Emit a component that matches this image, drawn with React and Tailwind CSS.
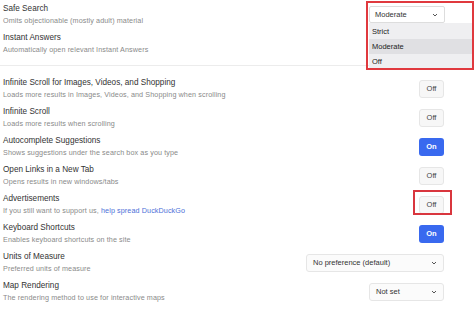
import React from 'react'

const font = { fontFamily: '"Liberation Sans", Arial, sans-serif' }

const Chevron = () => (
  <svg width="6" height="4" viewBox="0 0 6 4" className="shrink-0">
    <path d="M1 1 L3 3 L5 1" fill="none" stroke="#555" strokeWidth="1" />
  </svg>
)

const Toggle = ({ on }) =>
  on ? (
    <div className="w-[25px] h-[18px] rounded-[3px] bg-[#3969ef] text-white text-[7.5px] font-bold flex items-center justify-center">On</div>
  ) : (
    <div className="w-[25px] h-[18px] rounded-[3px] bg-[#f7f7f7] border border-[#e6e6e6] text-[#444] text-[7.5px] flex items-center justify-center">Off</div>
  )

const Select = ({ value, width }) => (
  <div className={`${width} h-[18px] rounded-[3px] bg-[#fbfbfb] border border-[#e6e6e6] flex items-center justify-between pl-[6px] pr-[6px] text-[7.5px] text-[#333]`}>
    <span>{value}</span>
    <Chevron />
  </div>
)

const Row = ({ title, desc, children, pr = 'pr-[30px]' }) => (
  <div className={`h-[29px] flex items-center justify-between ${pr}`}>
    <div className="-mt-[2px]">
      <div className="text-[8.2px] leading-[13px] text-[#333]">{title}</div>
      <div className="text-[7.2px] leading-[11px] text-[#8a8a8a] tracking-[0.1px]">{desc}</div>
    </div>
    {children}
  </div>
)

const rows = [
  { title: 'Infinite Scroll for Images, Videos, and Shopping', desc: 'Loads more results in Images, Videos, and Shopping when scrolling', c: <Toggle /> },
  { title: 'Infinite Scroll', desc: 'Loads more results when scrolling', c: <Toggle /> },
  { title: 'Autocomplete Suggestions', desc: 'Shows suggestions under the search box as you type', c: <Toggle on /> },
  { title: 'Open Links in a New Tab', desc: 'Opens results in new windows/tabs', c: <Toggle /> },
  {
    title: 'Advertisements',
    desc: (
      <>If you still want to support us, <span className="text-[#4b6fd8]">help spread DuckDuckGo</span></>
    ),
    c: (
      <div className="relative">
        <Toggle />
        <div className="absolute -left-[6px] -top-[6px] w-[39px] h-[25px] border-2 border-[#d9363e]" />
      </div>
    ),
  },
  { title: 'Keyboard Shortcuts', desc: 'Enables keyboard shortcuts on the site', c: <Toggle on /> },
  { title: 'Units of Measure', desc: 'Preferred units of measure', c: <Select value="No preference (default)" width="w-[138px]" /> },
  { title: 'Map Rendering', desc: 'The rendering method to use for interactive maps', c: <Select value="Not set" width="w-[75px]" /> },
]

export default function App() {
  return (
    <div className="w-[474px] h-[310px] bg-white overflow-hidden relative pl-[3px]" style={font}>
      <Row title="Safe Search" desc="Omits objectionable (mostly adult) material" pr="pr-[29px]">
        <div className="relative">
          <div className="w-[76px] h-[17px] rounded-[2px] bg-white border border-[#ddd] flex items-center justify-between pl-[5px] pr-[6px] text-[7.5px] text-[#333]">
            <span>Moderate</span>
            <Chevron />
          </div>
          <div className="absolute left-0 top-[17px] w-[104px] bg-[#efeff1] text-[7.5px] text-[#222] py-[1px]">
            <div className="h-[15px] flex items-center pl-[3px]">Strict</div>
            <div className="h-[15px] flex items-center pl-[3px] bg-[#e0e0e3]">Moderate</div>
            <div className="h-[15px] flex items-center pl-[3px]">Off</div>
          </div>
          <div className="absolute -left-[3px] -top-[5px] w-[108px] h-[69px] border-2 border-[#e0393e]" />
        </div>
      </Row>
      <Row title="Instant Answers" desc="Automatically open relevant Instant Answers">
        <Toggle on />
      </Row>
      <div className="mt-[7px] mb-[8px] h-px bg-[#ececec] -ml-[3px]" />
      {rows.map((r, i) => (
        <Row key={i} title={r.title} desc={r.desc}>{r.c}</Row>
      ))}
    </div>
  )
}
